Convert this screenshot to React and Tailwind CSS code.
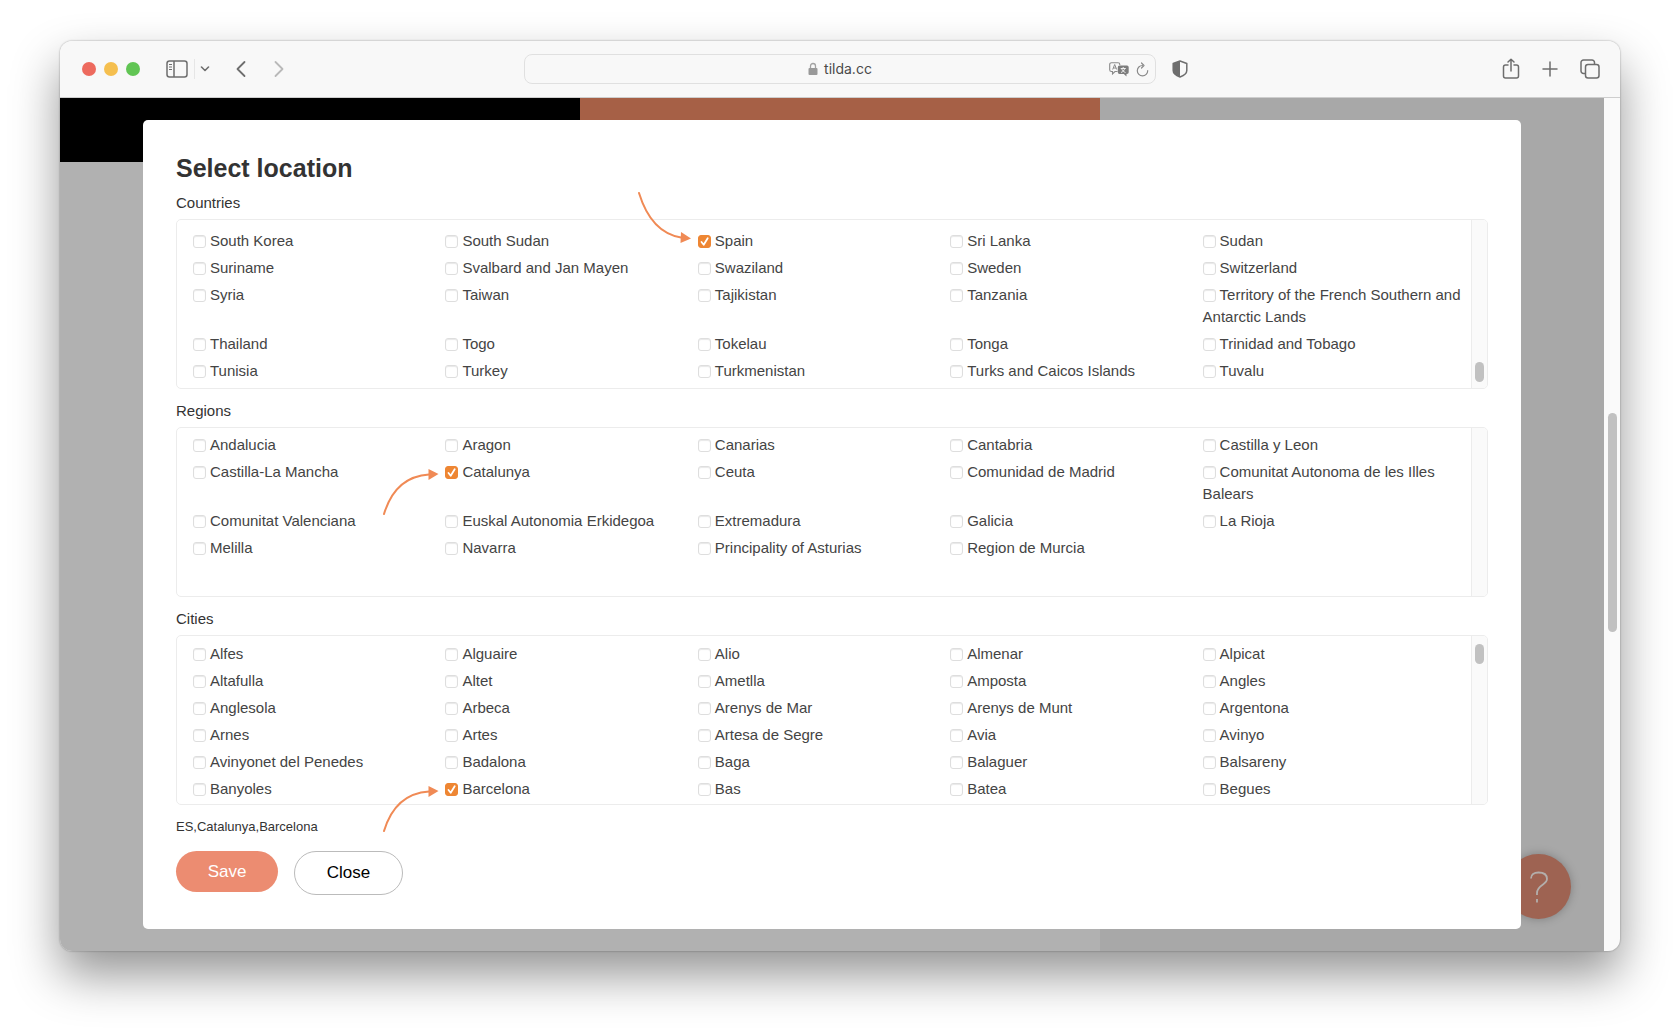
import { useState } from "react";

const COUNTRIES = [
  "South Korea", "South Sudan", "Spain", "Sri Lanka", "Sudan",
  "Suriname", "Svalbard and Jan Mayen", "Swaziland", "Sweden", "Switzerland",
  "Syria", "Taiwan", "Tajikistan", "Tanzania", "Territory of the French Southern and Antarctic Lands",
  "Thailand", "Togo", "Tokelau", "Tonga", "Trinidad and Tobago",
  "Tunisia", "Turkey", "Turkmenistan", "Turks and Caicos Islands", "Tuvalu",
];

const REGIONS = [
  "Andalucia", "Aragon", "Canarias", "Cantabria", "Castilla y Leon",
  "Castilla-La Mancha", "Catalunya", "Ceuta", "Comunidad de Madrid", "Comunitat Autonoma de les Illes Balears",
  "Comunitat Valenciana", "Euskal Autonomia Erkidegoa", "Extremadura", "Galicia", "La Rioja",
  "Melilla", "Navarra", "Principality of Asturias", "Region de Murcia",
];

const CITIES = [
  "Alfes", "Alguaire", "Alio", "Almenar", "Alpicat",
  "Altafulla", "Altet", "Ametlla", "Amposta", "Angles",
  "Anglesola", "Arbeca", "Arenys de Mar", "Arenys de Munt", "Argentona",
  "Arnes", "Artes", "Artesa de Segre", "Avia", "Avinyo",
  "Avinyonet del Penedes", "Badalona", "Baga", "Balaguer", "Balsareny",
  "Banyoles", "Barcelona", "Bas", "Batea", "Begues",
];

function ArrowDown() {
  return (
    <svg viewBox="0 0 56 52" className="pointer-events-none absolute right-full bottom-2 mr-1 h-[52px] w-[56px] max-w-none" fill="none">
      <path d="M1 1C9 27 22 42 43 45.500" stroke="#f08a55" strokeWidth="2" strokeLinecap="round" />
      <path d="M43 40L53 46.500L42.500 51Z" fill="#f08a55" />
    </svg>
  );
}

function ArrowUp() {
  return (
    <svg viewBox="0 0 58 46" className="pointer-events-none absolute top-2 right-full mr-1 h-[46px] w-[58px] max-w-none" fill="none">
      <path d="M1 45C8 22 22 7 46 5.500" stroke="#f08a55" strokeWidth="2" strokeLinecap="round" />
      <path d="M45.500 0L55.500 5L45.500 11Z" fill="#f08a55" />
    </svg>
  );
}

function Option({ name, checked, onToggle, arrow }) {
  return (
    <label className="relative -mr-3 mb-[5px] block text-[15px] leading-[22px] text-[#444]">
      {arrow}
      <input
        type="checkbox"
        checked={checked}
        onChange={onToggle}
        className="peer mr-1 inline-block h-[13px] w-[13px] appearance-none rounded-[3px] border border-[#dedede] bg-white align-[-2px] shadow-[inset_0_1px_1px_#e8e8e8] checked:border-[#ee8633] checked:bg-[#ee8633] checked:shadow-none"
      />
      <svg viewBox="0 0 13 13" className="pointer-events-none absolute top-[5px] left-0 hidden h-[13px] w-[13px] peer-checked:block" fill="none">
        <path d="M3.500 7L5.700 9.700L9.700 3.300" stroke="#fff" strokeWidth="1.800" strokeLinecap="round" strokeLinejoin="round" />
      </svg>
      {name}
    </label>
  );
}

function OptionList({ title, items, selected, onToggle, arrow, listClass = "pt-[6px]", thumbClass }) {
  return (
    <section className="mb-[11px]">
      <h2 className="mb-[5px] text-[15px] leading-[22px] text-[#333]">{title}</h2>
      <div className="flex h-[170px] rounded-[5px] border border-[#ececec]">
        <div className={`grid flex-1 grid-cols-5 content-start px-4 ${listClass}`}>
          {items.map((name) => (
            <Option
              key={name}
              name={name}
              checked={selected === name}
              onToggle={() => onToggle(name)}
              arrow={selected === name ? arrow : null}
            />
          ))}
        </div>
        <div className="flex w-4 flex-col items-center rounded-r-[4px] border-l border-[#ececec] bg-[#fafafa] pt-2 pb-[6px]">
          {thumbClass && <div className={`h-5 w-[9px] rounded-full bg-[#c1c1c1] ${thumbClass}`} />}
        </div>
      </div>
    </section>
  );
}

function Toolbar() {
  return (
    <header className="relative z-10 grid h-[57px] grid-cols-[1fr_40.5%_1fr] items-center border-b border-[#8f8f8f]/40 bg-[#f8f8f8] text-[#6e6e6e]">
      <div className="flex items-center pl-[22px]">
        <div className="flex gap-2">
          <span className="h-[14px] w-[14px] rounded-full bg-[#ed6a5e]" />
          <span className="h-[14px] w-[14px] rounded-full bg-[#f5bf4f]" />
          <span className="h-[14px] w-[14px] rounded-full bg-[#61c554]" />
        </div>
        <button type="button" aria-label="Sidebar" className="ml-[26px]">
          <svg viewBox="0 0 22 18" className="h-[18px] w-[22px]" fill="none" stroke="currentColor" strokeWidth="1.500">
            <rect x="1" y="1" width="20" height="16" rx="2.500" />
            <path d="M8 1V17" />
            <path d="M3 4.500H6M3 7H6M3 9.500H6" strokeWidth="1.200" />
          </svg>
        </button>
        <span className="ml-[6px] h-5 w-px bg-[#e6e6e6]" />
        <button type="button" aria-label="Tab groups" className="ml-[5px]">
          <svg viewBox="0 0 10 6" className="h-[6px] w-[10px]" fill="none" stroke="currentColor" strokeWidth="1.600" strokeLinecap="round" strokeLinejoin="round">
            <path d="M1.500 1L5 4.500L8.500 1" />
          </svg>
        </button>
        <button type="button" aria-label="Back" className="ml-[26px]">
          <svg viewBox="0 0 10 18" className="h-[18px] w-[10px]" fill="none" stroke="currentColor" strokeWidth="1.800" strokeLinecap="round" strokeLinejoin="round">
            <path d="M8.500 2L1.500 9L8.500 16" />
          </svg>
        </button>
        <button type="button" aria-label="Forward" className="ml-[28px] text-[#b9b9b9]">
          <svg viewBox="0 0 10 18" className="h-[18px] w-[10px]" fill="none" stroke="currentColor" strokeWidth="1.800" strokeLinecap="round" strokeLinejoin="round">
            <path d="M1.500 2L8.500 9L1.500 16" />
          </svg>
        </button>
      </div>

      <div className="flex h-[30px] items-center rounded-lg border border-[#e0e0e0] px-[6px]">
        <div className="w-10" />
        <div className="flex flex-1 items-center justify-center gap-[6px]">
          <svg viewBox="0 0 10 14" className="h-[14px] w-[10px]" fill="none">
            <path d="M2.500 6V4a2.500 2.500 0 0 1 5 0V6" stroke="#a2a2a2" strokeWidth="1.300" />
            <rect x="0.500" y="6" width="9" height="7" rx="1" fill="#999" />
          </svg>
          <span className="font-[Inter,sans-serif] text-[14px] leading-5 text-[#4a4a4a]">tilda.cc</span>
        </div>
        <div className="flex w-10 items-center justify-between text-[#8a8a8a]">
          <svg viewBox="0 0 20 15" className="h-[15px] w-5" fill="none">
            <path d="M8.500 9.500H6L3.500 12V9.500H2.500A1.800 1.800 0 0 1 .7 7.700V2.500A1.800 1.800 0 0 1 2.500 .7H9A1.800 1.800 0 0 1 10.800 2.500V3" stroke="currentColor" strokeWidth="1.100" />
            <path d="M3.700 7.500L5.700 2.500L7.700 7.500M4.400 6H7" stroke="currentColor" strokeWidth="1" />
            <path d="M10.500 3.500H18A1.700 1.700 0 0 1 19.700 5.200V10.300A1.700 1.700 0 0 1 18 12H17.500V14.500L14.800 12H10.500A1.700 1.700 0 0 1 8.800 10.300V5.200A1.700 1.700 0 0 1 10.500 3.500Z" fill="#7d7d7d" />
            <path d="M14.200 5V6.300M11.700 6.500H16.800M12.700 6.500C13.200 8.500 14.500 9.700 16.500 10.500M15.700 6.500C15.200 8.500 14 9.700 12 10.500" stroke="#f8f8f8" strokeWidth="0.900" />
          </svg>
          <svg viewBox="0 0 13 15" className="h-[15px] w-[13px]" fill="none" stroke="currentColor" strokeWidth="1.200" strokeLinecap="round" strokeLinejoin="round">
            <path d="M6.500 3.500A5.200 5.200 0 1 0 11.700 8.700" />
            <path d="M5.500 1L8 3.500L5.500 6" />
          </svg>
        </div>
      </div>

      <div className="flex items-center justify-between pr-5 pl-4">
        <button type="button" aria-label="Privacy report">
          <svg viewBox="0 0 16 18" className="h-[18px] w-4" fill="none">
            <path d="M8 1L14.800 3.500V10.500C14.800 13.500 12 15.500 8 17C4 15.500 1.200 13.500 1.200 10.500V3.500Z" stroke="currentColor" strokeWidth="1.500" strokeLinejoin="round" />
            <path d="M8 1V17C4 15.500 1.200 13.500 1.200 10.500V3.500Z" fill="currentColor" />
          </svg>
        </button>
        <div className="flex items-center gap-[22px]">
          <button type="button" aria-label="Share">
            <svg viewBox="0 0 18 22" className="h-[22px] w-[18px]" fill="none" stroke="currentColor" strokeWidth="1.500" strokeLinecap="round" strokeLinejoin="round">
              <path d="M6 7H3.500A2 2 0 0 0 1.500 9V18A2 2 0 0 0 3.500 20H14.500A2 2 0 0 0 16.500 18V9A2 2 0 0 0 14.500 7H12" />
              <path d="M9 13V1.500M6 4L9 1.200L12 4" />
            </svg>
          </button>
          <button type="button" aria-label="New tab">
            <svg viewBox="0 0 16 16" className="h-4 w-4" fill="none" stroke="currentColor" strokeWidth="1.500" strokeLinecap="round">
              <path d="M8 1V15M1 8H15" />
            </svg>
          </button>
          <button type="button" aria-label="Tab overview">
            <svg viewBox="0 0 20 20" className="h-5 w-5" fill="none" stroke="currentColor" strokeWidth="1.500" strokeLinejoin="round">
              <rect x="5.500" y="5.500" width="13.500" height="13.500" rx="2.500" />
              <path d="M5.500 14.500H3.500A2.500 2.500 0 0 1 1 12V3.500A2.500 2.500 0 0 1 3.500 1H12A2.500 2.500 0 0 1 14.500 3.500V5.500" />
            </svg>
          </button>
        </div>
      </div>
    </header>
  );
}

export default function App() {
  const [country, setCountry] = useState("Spain");
  const [region, setRegion] = useState("Catalunya");
  const [city, setCity] = useState("Barcelona");

  return (
    <div className="min-h-screen bg-white px-[60px] pt-[41px] pb-[78px] font-['Liberation_Sans',Arial,sans-serif]">
      <div className="overflow-hidden rounded-xl shadow-[0_0_2px_rgba(0,0,0,0.4),0_24px_48px_rgba(0,0,0,0.42)]">
        <Toolbar />
        <div className="relative flex">
          {/* dimmed page behind the dialog */}
          <div className="absolute inset-0 grid grid-cols-3">
            <div className="bg-[#b1b1b1]"><div className="h-16 bg-black" /></div>
            <div className="bg-[#b1b1b1]"><div className="h-16 bg-[#a66046]" /></div>
            <div className="bg-[#a8a8a8]" />
          </div>
          <button
            type="button"
            aria-label="Help"
            className="absolute right-[49px] bottom-8 flex h-[65px] w-[65px] items-center justify-center rounded-full bg-[#9e6352] shadow-[0_0_10px_rgba(0,0,0,0.25)]"
          >
            <svg viewBox="0 0 20 32" className="h-8 w-5" fill="none" stroke="#b3aeab" strokeWidth="1.800">
              <path d="M2 7.500C2 3.500 5 1.500 9.500 1.500C15 1.500 18 4 18 8C18 14 8 13.500 8 22V24M8 28V31.500" />
            </svg>
          </button>

          <main className="relative mt-[22px] mr-[83px] mb-[22px] ml-[83px] flex-1 rounded-[5px] bg-white px-[33px] pt-8 pb-[34px]">
            <h1 className="mb-2 text-[25px] leading-8 font-bold text-[#333]">Select location</h1>
            <OptionList
              title="Countries"
              items={COUNTRIES}
              selected={country}
              onToggle={setCountry}
              arrow={<ArrowDown />}
              listClass="pt-[10px]"
              thumbClass="mt-auto"
            />
            <OptionList title="Regions" items={REGIONS} selected={region} onToggle={setRegion} arrow={<ArrowUp />} />
            <OptionList
              title="Cities"
              items={CITIES}
              selected={city}
              onToggle={setCity}
              arrow={<ArrowUp />}
              listClass="pt-[7px]"
              thumbClass="mb-auto"
            />
            <p className="mb-[13px] text-[13px] leading-[22px] text-[#333]">ES,{region},{city}</p>
            <div className="flex items-start gap-4">
              <button type="button" className="h-[41px] w-[102px] rounded-full bg-[#ec8c71] text-[17px] text-white">Save</button>
              <button type="button" className="h-[44px] w-[109px] rounded-full border border-[#bbb] bg-white text-[17px] text-black">Close</button>
            </div>
          </main>

          {/* page scrollbar */}
          <div className="relative flex w-4 justify-center bg-[#fafafa]">
            <div className="mt-[315px] h-[219px] w-[9px] rounded-full bg-[#c1c1c1]" />
          </div>
        </div>
      </div>
    </div>
  );
}
